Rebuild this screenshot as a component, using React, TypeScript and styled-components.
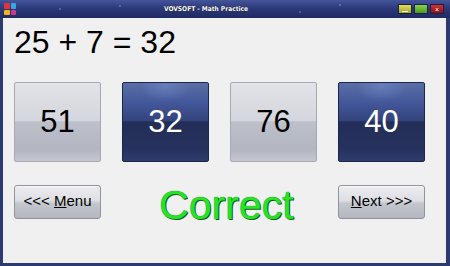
import React from "react";
import styled, { createGlobalStyle, css } from "styled-components";

const Global = createGlobalStyle`
  html, body { margin: 0; padding: 0; background: #f0f0f0; }
  body { width: 450px; height: 266px; overflow: hidden; font-family: "Liberation Sans", Arial, sans-serif; }
`;

const Window = styled.div`
  width: 450px;
  height: 266px;
  box-sizing: border-box;
  display: flex;
  flex-direction: column;
  background: #2d3a72;
  padding: 0 4px 3px 3px;
`;

const TitleBar = styled.div`
  position: relative;
  height: 18px;
  margin: 0 -4px 0 -3px;
  display: flex;
  align-items: center;
  background:
    radial-gradient(circle at 60px 9px, rgba(255,255,255,0.25) 0 0.6px, transparent 1.2px),
    radial-gradient(circle at 120px 6px, rgba(255,255,255,0.25) 0 0.6px, transparent 1.2px),
    radial-gradient(circle at 300px 12px, rgba(255,255,255,0.25) 0 0.6px, transparent 1.2px),
    radial-gradient(circle at 340px 5px, rgba(255,255,255,0.25) 0 0.6px, transparent 1.2px),
    linear-gradient(#44559a 0%, #2c3a7a 45%, #1f2a62 100%);
`;

const AppIcon = styled.div`
  position: absolute;
  left: 4px;
  top: 3px;
  width: 12px;
  height: 12px;
  display: grid;
  grid-template-columns: 1fr 1fr;
  gap: 1px;
`;

const Sq = styled.div<{ $c: string }>`
  background: ${(p) => p.$c};
  border-radius: 1px;
`;

const Title = styled.div`
  flex: 1;
  text-align: center;
  color: #ffffff;
  font-family: "DejaVu Sans Condensed", "DejaVu Sans", sans-serif;
  font-weight: bold;
  font-size: 6.6px;
  padding-right: 38px;
  text-shadow: 0 0 1px #000;
`;

const Controls = styled.div`
  position: absolute;
  right: 6px;
  top: 4px;
  display: flex;
  gap: 2px;
`;

const Ctl = styled.div<{ $c: string; $d: string }>`
  width: 14px;
  height: 10px;
  box-sizing: border-box;
  border: 1px solid #1a2048;
  background: linear-gradient(${(p) => p.$c}, ${(p) => p.$d});
  display: flex;
  align-items: center;
  justify-content: center;
  color: #fff;
  font-size: 7px;
  line-height: 1;
`;

const MinBar = styled.span`
  width: 6px;
  height: 1px;
  background: #fff;
  margin-top: 4px;
`;

const Client = styled.div`
  flex: 1;
  background: #f0f0f0;
  padding: 8px 0 0 11px;
  display: flex;
  flex-direction: column;
`;

const Equation = styled.div`
  font-size: 32px;
  line-height: 32px;
  color: #000;
  height: 32px;
`;

const Answers = styled.div`
  margin-top: 24px;
  display: flex;
  gap: 21px;
`;

const light = css`
  background: linear-gradient(
    #e2e3e8 0%,
    #d4d6dd 48%,
    #bdc0c9 50%,
    #b3b6c1 85%,
    #c4c7d0 100%
  );
  border: 1px solid #a6a9b2;
  color: #000;
`;

const dark = css`
  background:
    radial-gradient(ellipse 36px 22px at 50% 5%, rgba(130, 160, 225, 0.35), transparent 70%),
    linear-gradient(
      #5a6ea6 0%,
      #44579a 25%,
      #33447c 48%,
      #232e58 50%,
      #26315d 85%,
      #2e3b6c 100%
    );
  border: 1px solid #1e2648;
  color: #fff;
`;

const AnswerButton = styled.div<{ $dark?: boolean }>`
  width: 87px;
  height: 80px;
  box-sizing: border-box;
  border-radius: 2px;
  display: flex;
  align-items: center;
  justify-content: center;
  font-size: 31px;
  ${(p) => (p.$dark ? dark : light)}
`;

const BottomRow = styled.div`
  margin-top: 23px;
  width: 411px;
  display: grid;
  grid-template-columns: 87px 1fr 87px;
  align-items: start;
`;

const NavButton = styled.div`
  height: 34px;
  box-sizing: border-box;
  border: 1px solid #8f939c;
  border-radius: 3px;
  background: linear-gradient(#ececf0 0%, #dedfe4 45%, #c4c6cd 55%, #b4b7bf 100%);
  display: flex;
  align-items: center;
  justify-content: center;
  font-size: 15px;
  color: #000;
  padding-bottom: 3px;
  box-shadow: inset 0 1px 0 #fafafa;
  white-space: pre;
`;

const Label = styled.span`
  white-space: pre;
`;

const U = styled.span`
  text-decoration: underline;
`;

const Result = styled.div`
  height: 34px;
  box-sizing: border-box;
  padding-top: 3px;
  line-height: 34px;
  text-align: center;
  font-size: 41px;
  color: #22e622;
  padding-left: 14px;
  text-shadow: 1px 1px 0 #1a5a1a, 0 0 1px #0a3a0a;
`;

export default function App() {
  return (
    <>
      <Global />
      <Window>
        <TitleBar>
          <AppIcon>
            <Sq $c="#e2343c" />
            <Sq $c="#37a7e0" />
            <Sq $c="#f0b020" />
            <Sq $c="#d0348a" />
          </AppIcon>
          <Title>VOVSOFT - Math Practice</Title>
          <Controls>
            <Ctl $c="#e2e05a" $d="#a8a620">
              <MinBar />
            </Ctl>
            <Ctl $c="#8ad24a" $d="#4a9a1e" />
            <Ctl $c="#d03232" $d="#8a1414">×</Ctl>
          </Controls>
        </TitleBar>
        <Client>
          <Equation>25 + 7 = 32</Equation>
          <Answers>
            <AnswerButton>51</AnswerButton>
            <AnswerButton $dark>32</AnswerButton>
            <AnswerButton>76</AnswerButton>
            <AnswerButton $dark>40</AnswerButton>
          </Answers>
          <BottomRow>
            <NavButton>
              <Label>
                {"<<< "}
                <U>M</U>enu
              </Label>
            </NavButton>
            <Result>Correct</Result>
            <NavButton>
              <Label>
                <U>N</U>ext {">>>"}
              </Label>
            </NavButton>
          </BottomRow>
        </Client>
      </Window>
    </>
  );
}
